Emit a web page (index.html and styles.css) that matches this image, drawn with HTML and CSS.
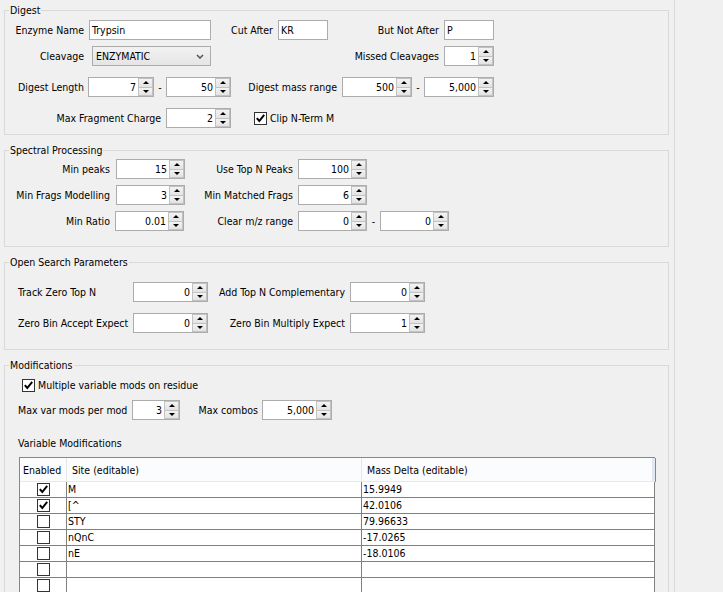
FILE: index.html
```html
<!DOCTYPE html>
<html>
<head>
<meta charset="utf-8">
<link rel="stylesheet" href="styles.css">
</head>
<body>
<div class="app">
  <div class="main">

    <section class="group">
      <div class="group-title">Digest</div>
      <div class="row mt3">
        <span class="lbl w79">Enzyme Name</span>
        <span class="field ml5 w122">Trypsin</span>
        <span class="lbl w62">Cut After</span>
        <span class="field ml5 w50">KR</span>
        <span class="lbl w111">But Not After</span>
        <span class="field ml5 w50">P</span>
      </div>
      <div class="row mt6">
        <span class="lbl w79">Cleavage</span>
        <span class="combo ml8 w119"><span class="combo-text">ENZYMATIC</span><svg class="chev" width="8" height="5" viewBox="0 0 8 5"><path d="M1 1 L4 4 L7 1" fill="none" stroke="#555" stroke-width="1.5"/></svg></span>
        <span class="lbl w228">Missed Cleavages</span>
        <span class="spin ml5 w50"><span class="val">1</span><span class="btns"><span class="btn"><i class="up"></i></span><span class="btn"><i class="dn"></i></span></span></span>
      </div>
      <div class="row mt11">
        <span class="lbl w79">Digest Length</span>
        <span class="spin ml4 w66"><span class="val">7</span><span class="btns"><span class="btn"><i class="up"></i></span><span class="btn"><i class="dn"></i></span></span></span>
        <span class="dash w12">-</span>
        <span class="spin w65"><span class="val">50</span><span class="btns"><span class="btn"><i class="up"></i></span><span class="btn"><i class="dn"></i></span></span></span>
        <span class="lbl w106">Digest mass range</span>
        <span class="spin ml5 w70"><span class="val">500</span><span class="btns"><span class="btn"><i class="up"></i></span><span class="btn"><i class="dn"></i></span></span></span>
        <span class="dash w12">-</span>
        <span class="spin w70"><span class="val">5,000</span><span class="btns"><span class="btn"><i class="up"></i></span><span class="btn"><i class="dn"></i></span></span></span>
      </div>
      <div class="row mt11">
        <span class="lbl w156">Max Fragment Charge</span>
        <span class="spin ml5 w65"><span class="val">2</span><span class="btns"><span class="btn"><i class="up"></i></span><span class="btn"><i class="dn"></i></span></span></span>
        <span class="check ml23"><svg width="11" height="11" viewBox="0 0 11 11"><path d="M1.8 5.2 L4.3 8 L9.2 1.8" fill="none" stroke="#000" stroke-width="2"/></svg></span>
        <span class="text ml3">Clip N-Term M</span>
      </div>
      <div class="pb6"></div>
    </section>

    <section class="group">
      <div class="group-title">Spectral Processing</div>
      <div class="row mt2">
        <span class="lbl w105">Min peaks</span>
        <span class="spin ml6 w69"><span class="val">15</span><span class="btns"><span class="btn"><i class="up"></i></span><span class="btn"><i class="dn"></i></span></span></span>
        <span class="lbl w108">Use Top N Peaks</span>
        <span class="spin ml5 w69"><span class="val">100</span><span class="btns"><span class="btn"><i class="up"></i></span><span class="btn"><i class="dn"></i></span></span></span>
      </div>
      <div class="row mt6">
        <span class="lbl w105">Min Frags Modelling</span>
        <span class="spin ml6 w69"><span class="val">3</span><span class="btns"><span class="btn"><i class="up"></i></span><span class="btn"><i class="dn"></i></span></span></span>
        <span class="lbl w108">Min Matched Frags</span>
        <span class="spin ml5 w69"><span class="val">6</span><span class="btns"><span class="btn"><i class="up"></i></span><span class="btn"><i class="dn"></i></span></span></span>
      </div>
      <div class="row mt6">
        <span class="lbl w105">Min Ratio</span>
        <span class="spin ml5 w69 mr1"><span class="val">0.01</span><span class="btns"><span class="btn"><i class="up"></i></span><span class="btn"><i class="dn"></i></span></span></span>
        <span class="lbl w108">Clear m/z range</span>
        <span class="spin ml5 w69"><span class="val">0</span><span class="btns"><span class="btn"><i class="up"></i></span><span class="btn"><i class="dn"></i></span></span></span>
        <span class="dash w13">-</span>
        <span class="spin w69"><span class="val">0</span><span class="btns"><span class="btn"><i class="up"></i></span><span class="btn"><i class="dn"></i></span></span></span>
      </div>
      <div class="pb15"></div>
    </section>

    <section class="group">
      <div class="group-title">Open Search Parameters</div>
      <div class="row mt13">
        <span class="lbl left w128">Track Zero Top N</span>
        <span class="spin w75"><span class="val">0</span><span class="btns"><span class="btn"><i class="up"></i></span><span class="btn"><i class="dn"></i></span></span></span>
        <span class="lbl w137">Add Top N Complementary</span>
        <span class="spin ml5 w75"><span class="val">0</span><span class="btns"><span class="btn"><i class="up"></i></span><span class="btn"><i class="dn"></i></span></span></span>
      </div>
      <div class="row mt11">
        <span class="lbl left w128">Zero Bin Accept Expect</span>
        <span class="spin w75"><span class="val">0</span><span class="btns"><span class="btn"><i class="up"></i></span><span class="btn"><i class="dn"></i></span></span></span>
        <span class="lbl w137">Zero Bin Multiply Expect</span>
        <span class="spin ml5 w75"><span class="val">1</span><span class="btns"><span class="btn"><i class="up"></i></span><span class="btn"><i class="dn"></i></span></span></span>
      </div>
      <div class="pb16"></div>
    </section>

    <section class="group tall">
      <div class="group-title">Modifications</div>
      <div class="row short mt6">
        <span class="check ml17"><svg width="11" height="11" viewBox="0 0 11 11"><path d="M1.8 5.2 L4.3 8 L9.2 1.8" fill="none" stroke="#000" stroke-width="2"/></svg></span>
        <span class="text ml3">Multiple variable mods on residue</span>
      </div>
      <div class="row mt7">
        <span class="lbl left w127">Max var mods per mod</span>
        <span class="spin w48"><span class="val">3</span><span class="btns"><span class="btn"><i class="up"></i></span><span class="btn"><i class="dn"></i></span></span></span>
        <span class="lbl w78">Max combos</span>
        <span class="spin ml4 w70"><span class="val">5,000</span><span class="btns"><span class="btn"><i class="up"></i></span><span class="btn"><i class="dn"></i></span></span></span>
      </div>
      <div class="caption">Variable Modifications</div>
      <table class="mods">
        <colgroup><col class="c1"><col class="c2"><col class="c3"></colgroup>
        <thead>
          <tr><th class="h1">Enabled</th><th>Site (editable)</th><th class="hlast">Mass Delta (editable)</th></tr>
        </thead>
        <tbody>
          <tr><td class="cb"><span class="check"><svg width="11" height="11" viewBox="0 0 11 11"><path d="M1.8 5.2 L4.3 8 L9.2 1.8" fill="none" stroke="#000" stroke-width="2"/></svg></span></td><td>M</td><td>15.9949</td></tr>
          <tr><td class="cb"><span class="check"><svg width="11" height="11" viewBox="0 0 11 11"><path d="M1.8 5.2 L4.3 8 L9.2 1.8" fill="none" stroke="#000" stroke-width="2"/></svg></span></td><td>[^</td><td>42.0106</td></tr>
          <tr><td class="cb"><span class="check"></span></td><td>STY</td><td>79.96633</td></tr>
          <tr><td class="cb"><span class="check"></span></td><td>nQnC</td><td>-17.0265</td></tr>
          <tr><td class="cb"><span class="check"></span></td><td>nE</td><td>-18.0106</td></tr>
          <tr><td class="cb"><span class="check"></span></td><td></td><td></td></tr>
          <tr><td class="cb"><span class="check"></span></td><td></td><td></td></tr>
        </tbody>
      </table>
    </section>

  </div>
  <div class="side"></div>
</div>
</body>
</html>
```

FILE: styles.css
```css
html, body {
  margin: 0;
  padding: 0;
}
body {
  width: 723px;
  height: 592px;
  overflow: hidden;
  background: #f0f0f0;
  color: #000;
  font-family: "DejaVu Sans Condensed", "DejaVu Sans", "Liberation Sans", sans-serif;
  font-stretch: condensed;
  font-size: 10.5px;
  line-height: 13px;
}
.app {
  display: flex;
  height: 592px;
  overflow: hidden;
}
.main {
  width: 674px;
  flex: none;
  box-sizing: border-box;
  padding: 10px 0 0 4px;
  overflow: hidden;
}
.side {
  flex: 1;
  border-left: 1px solid #d9d9d9;
}
.group {
  width: 665px;
  box-sizing: border-box;
  border: 1px solid #d9d9d9;
}
.group + .group {
  margin-top: 15px;
}
.group.tall {
  height: 230px;
}
.group-title {
  width: fit-content;
  margin: -7px 0 0 4px;
  padding: 0 1px;
  background: #f0f0f0;
  line-height: 13px;
  height: 13px;
}
.row {
  display: flex;
  align-items: center;
  height: 20px;
}
.row.short { height: 15px; }

.mt2 { margin-top: 2px; }
.mt3 { margin-top: 3px; }
.mt6 { margin-top: 6px; }
.mt7 { margin-top: 7px; }
.mt11 { margin-top: 11px; }
.mt13 { margin-top: 13px; }
.pb6 { height: 6px; }
.pb15 { height: 15px; }
.pb16 { height: 16px; }

.ml3 { margin-left: 3px; }
.ml4 { margin-left: 4px; }
.ml5 { margin-left: 5px; }
.ml6 { margin-left: 6px; }
.ml8 { margin-left: 8px; }
.ml17 { margin-left: 17px; }
.ml23 { margin-left: 23px; }
.mr1 { margin-right: 1px; }

.w12 { width: 12px; }
.w13 { width: 13px; }
.w48 { width: 48px; }
.w50 { width: 50px; }
.w62 { width: 62px; }
.w65 { width: 65px; }
.w66 { width: 66px; }
.w69 { width: 69px; }
.w70 { width: 70px; }
.w75 { width: 75px; }
.w78 { width: 78px; }
.w79 { width: 79px; }
.w105 { width: 105px; }
.w106 { width: 106px; }
.w108 { width: 108px; }
.w111 { width: 111px; }
.w119 { width: 119px; }
.w122 { width: 122px; }
.w127 { width: 127px; }
.w128 { width: 128px; }
.w137 { width: 137px; }
.w156 { width: 156px; }
.w228 { width: 228px; }

.lbl {
  flex: none;
  text-align: right;
  white-space: nowrap;
  box-sizing: border-box;
}
.lbl.left {
  text-align: left;
  padding-left: 13px;
}
.text {
  white-space: nowrap;
}
.dash {
  flex: none;
  text-align: center;
}

.field {
  flex: none;
  box-sizing: border-box;
  height: 20px;
  border: 1px solid #acacac;
  background: #fff;
  padding: 0 2px;
  line-height: 18px;
  white-space: nowrap;
}

.combo {
  flex: none;
  box-sizing: border-box;
  height: 20px;
  border: 1px solid #acacac;
  background: linear-gradient(#f2f2f2, #e5e5e5);
  display: flex;
  align-items: center;
  padding: 0 6px 0 3px;
}
.combo-text {
  flex: 1;
  white-space: nowrap;
}
.chev {
  display: block;
  margin-top: 1px;
}

.spin {
  flex: none;
  box-sizing: border-box;
  height: 20px;
  border: 1px solid #acacac;
  background: #fff;
  display: flex;
}
.spin .val {
  flex: 1;
  text-align: right;
  padding-right: 2px;
  line-height: 18px;
  white-space: nowrap;
}
.spin .btns {
  flex: none;
  width: 15px;
  display: flex;
  flex-direction: column;
}
.spin .btn {
  flex: 1;
  box-sizing: border-box;
  border: 1px solid #c2c2c2;
  background: linear-gradient(#f3f3f3, #e3e3e3);
  display: flex;
  align-items: center;
  justify-content: center;
}
.spin .btn + .btn {
  margin-top: -1px;
}
.up {
  width: 0;
  height: 0;
  border-left: 3px solid transparent;
  border-right: 3px solid transparent;
  border-bottom: 3px solid #000;
}
.dn {
  width: 0;
  height: 0;
  border-left: 3px solid transparent;
  border-right: 3px solid transparent;
  border-top: 3px solid #000;
}

.check {
  flex: none;
  box-sizing: border-box;
  width: 13px;
  height: 13px;
  border: 1px solid #333;
  background: #fff;
  display: flex;
  align-items: center;
  justify-content: center;
}
.check svg {
  display: block;
}

.caption {
  margin-top: 17px;
  padding-left: 13px;
  height: 13px;
}

.mods {
  margin: 7px 0 0 14px;
  width: 636px;
  table-layout: fixed;
  border-collapse: separate;
  border-spacing: 0;
  border-top: 1px solid #828790;
  border-left: 1px solid #828790;
  background: #fff;
}
.c1 { width: 47px; }
.c2 { width: 295px; }
.c3 { width: 293px; }
.mods th {
  height: 24px;
  box-sizing: border-box;
  padding: 2px 0 0 5px;
  font-weight: normal;
  text-align: left;
  white-space: nowrap;
  background: #fbfcfd;
  border-right: 1px solid #e5e5e5;
  border-bottom: 1px solid #e3e9f1;
}
.mods th.h1 {
  padding-left: 3px;
}
.mods th.hlast {
  border-right: 3px solid #e1e8f3;
  box-shadow: 1px 0 0 #828790;
}
.mods td {
  height: 16px;
  box-sizing: border-box;
  padding: 0 1px;
  line-height: 15px;
  border-right: 1px solid #808080;
  border-bottom: 1px solid #808080;
  white-space: nowrap;
  overflow: hidden;
}
.mods td.cb .check {
  margin: 0 auto;
}
```
